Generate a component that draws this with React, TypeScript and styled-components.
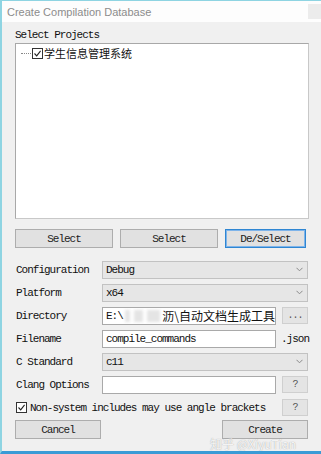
import React from 'react';
import styled, { createGlobalStyle } from 'styled-components';

const GlobalStyle = createGlobalStyle`
	html, body {
		margin: 0;
		padding: 0;
		background: #f0f0f0;
	}
`;

const mono = `'Liberation Mono', 'Noto Sans CJK SC', monospace`;

const Window = styled.div`
	position: relative;
	width: 321px;
	height: 454px;
	box-sizing: border-box;
	border-left: 2px solid #8ed4e2;
	border-top: 1px solid #8ed4e2;
	border-bottom: 3px solid #3a9bd6;
	background: #f0f0f0;
	display: flex;
	flex-direction: column;
	overflow: hidden;
	font-family: ${mono};
	font-size: 11px;
	letter-spacing: -1px;
	color: #111;
`;

const TitleBar = styled.div`
	height: 21px;
	background: #fdfdfd;
	display: flex;
	align-items: center;
	justify-content: space-between;
	padding-left: 5px;
	font-family: 'Liberation Sans', Arial, sans-serif;
	font-size: 11px;
	letter-spacing: 0;
	color: #8c8c8c;
`;

const CloseBox = styled.div`
	width: 14px;
	height: 15px;
	background: #ececec;
	margin-right: -1px;
`;

const Body = styled.div`
	flex: 1;
	padding: 6px 12px 0 13px;
	display: flex;
	flex-direction: column;
`;

const Caption = styled.div`
	height: 14px;
	line-height: 14px;
`;

const ListBox = styled.div`
	margin-top: 1px;
	height: 176px;
	box-sizing: border-box;
	background: #fff;
	border: 1px solid #a8a8a8;
	border-right-color: #c8c8c8;
	border-bottom-color: #c8c8c8;
	padding: 2px 0 0 5px;
`;

const TreeItem = styled.div`
	display: flex;
	align-items: center;
	height: 14px;
	font-family: 'Noto Sans CJK SC', sans-serif;
	font-size: 11px;
	letter-spacing: 0;
`;

const TreeLine = styled.span`
	width: 10px;
	border-top: 1px dotted #888;
	margin-right: 1px;
`;

const Box = styled.span`
	width: 9px;
	height: 9px;
	border: 1px solid #333;
	background: #fff;
	display: inline-flex;
	align-items: center;
	justify-content: center;
	margin-right: 1px;
	flex: none;
`;

const ButtonRow = styled.div`
	margin-top: 10px;
	display: grid;
	grid-template-columns: 98px 98px 81px;
	column-gap: 7px;
`;

const Button = styled.div<{ $focused?: boolean; $w?: number }>`
	height: 19px;
	box-sizing: border-box;
	${p => (p.$w ? `width: ${p.$w}px;` : '')}
	background: #e1e1e1;
	border: 1px solid ${p => (p.$focused ? '#2f86d2' : '#adadad')};
	${p => (p.$focused ? 'box-shadow: inset 0 0 0 1px #7eb4ea;' : '')}
	display: flex;
	align-items: center;
	justify-content: center;
	color: #222;
`;

const Form = styled.div`
	margin-top: 12px;
	display: grid;
	grid-template-columns: 87px 174px 6px 26px;
	grid-auto-rows: 19px;
	row-gap: 4px;
	align-items: center;
`;

const Label = styled.div`
	grid-column: 1;
	padding-left: 1px;
`;

const Select = styled.div<{ $span?: boolean }>`
	grid-column: ${p => (p.$span ? '2 / 5' : '2')};
	height: 18px;
	box-sizing: border-box;
	background: #e6e6e6;
	border: 1px solid #c2c2c2;
	display: flex;
	align-items: center;
	justify-content: space-between;
	padding: 0 4px 0 3px;
`;

const Input = styled.div`
	grid-column: 2;
	height: 18px;
	box-sizing: border-box;
	background: #fff;
	border: 1px solid #a9a9a9;
	display: flex;
	align-items: center;
	padding-left: 3px;
	overflow: hidden;
	white-space: nowrap;
`;

const Cjk = styled.span`
	font-family: 'Noto Sans CJK SC', sans-serif;
	font-size: 12px;
	letter-spacing: 0;
`;

const Blur = styled.span<{ $w: number }>`
	display: inline-block;
	width: ${p => p.$w}px;
	height: 12px;
	background: #e4e4e4;
	filter: blur(1.5px);
	margin: 0 2px;
`;

const SideButton = styled(Button)`
	grid-column: 4;
	height: 17px;
	background: #e4e4e4;
	border-color: #cfcfcf;
	color: #555;
	font-size: 10px;
`;

const Suffix = styled.div`
	grid-column: 3 / 5;
	padding-left: 5px;
	white-space: nowrap;
`;

const CheckRow = styled.div`
	grid-column: 1 / 3;
	display: flex;
	align-items: center;
	white-space: nowrap;
	padding-left: 1px;
	& > span:first-child {
		margin-right: 3px;
	}
`;

const Footer = styled.div`
	margin-top: 3px;
	display: flex;
	justify-content: space-between;
	width: 293px;
`;

const Watermark = styled.div`
	position: absolute;
	left: 208px;
	top: 436px;
	font-family: 'Noto Sans CJK SC', 'Liberation Sans', sans-serif;
	font-size: 12px;
	line-height: 14px;
	letter-spacing: 0;
	color: rgba(255, 255, 255, 0.9);
	text-shadow: 0 0 1px rgba(110, 110, 110, 0.7);
	white-space: nowrap;
`;

const Chevron = () => (
	<svg width="7" height="5" viewBox="0 0 7 5">
		<path d="M0.5 0.8 L3.5 3.8 L6.5 0.8" fill="none" stroke="#8a8a8a" strokeWidth="1" />
	</svg>
);

const Check = () => (
	<Box>
		<svg width="7" height="7" viewBox="0 0 7 7">
			<path d="M0.5 3.5 L2.7 5.8 L6.6 0.9" fill="none" stroke="#222" strokeWidth="1.1" />
		</svg>
	</Box>
);

const App = () => (
	<>
		<GlobalStyle />
		<Window>
			<TitleBar>
				Create Compilation Database
				<CloseBox />
			</TitleBar>
			<Body>
				<Caption>Select Projects</Caption>
				<ListBox>
					<TreeItem>
						<TreeLine />
						<Check />
						学生信息管理系统
					</TreeItem>
				</ListBox>
				<ButtonRow>
					<Button>Select</Button>
					<Button>Select</Button>
					<Button $focused>De/Select</Button>
				</ButtonRow>
				<Form>
					<Label>Configuration</Label>
					<Select $span>Debug<Chevron /></Select>
					<Label>Platform</Label>
					<Select $span>x64<Chevron /></Select>
					<Label>Directory</Label>
					<Input>
						E:\<Blur $w={8} /><Blur $w={14} /><Blur $w={22} /><Cjk>沥\自动文档生成工具</Cjk>
					</Input>
					<SideButton>...</SideButton>
					<Label>Filename</Label>
					<Input>compile_commands</Input>
					<Suffix>.json</Suffix>
					<Label>C Standard</Label>
					<Select $span>c11<Chevron /></Select>
					<Label>Clang Options</Label>
					<Input />
					<SideButton>?</SideButton>
					<CheckRow>
						<Check />
						Non-system includes may use angle brackets
					</CheckRow>
					<SideButton>?</SideButton>
				</Form>
				<Footer>
					<Button $w={86}>Cancel</Button>
					<Button $w={86}>Create</Button>
				</Footer>
			</Body>
			<Watermark>知乎 @XiyuTian</Watermark>
		</Window>
	</>
);

export default App;
